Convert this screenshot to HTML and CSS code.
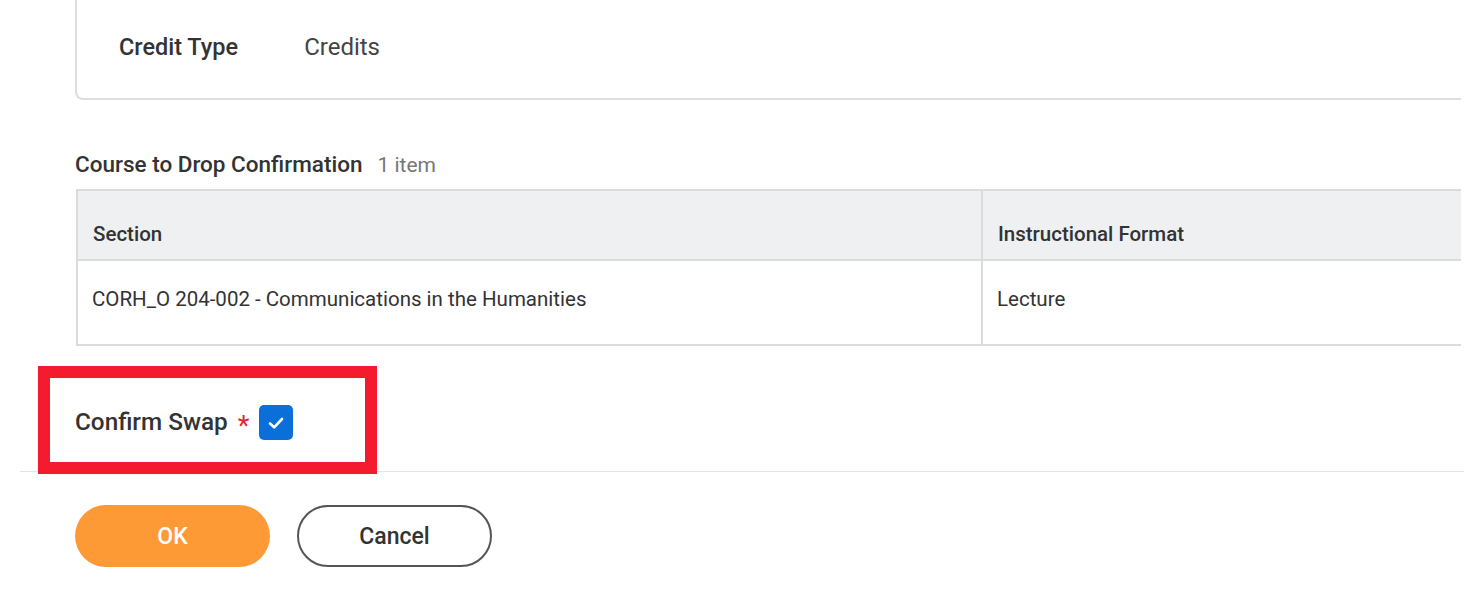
FILE: index.html
```html
<!DOCTYPE html>
<html lang="en">
<head>
  <meta charset="UTF-8" />
  <title>Course to Drop Confirmation</title>
  <link rel="stylesheet" href="styles.css">
</head>
<body>
  <div class="page">
    <div class="card">
      <span class="field-label">Credit Type</span>
      <span class="field-value">Credits</span>
    </div>

    <div class="grid-title">
      <span class="grid-name">Course to Drop Confirmation</span>
      <span class="grid-count">1 item</span>
    </div>

    <table class="grid">
      <tr>
        <th class="col-section">Section</th>
        <th>Instructional Format</th>
      </tr>
      <tr>
        <td class="col-section">CORH_O 204-002 - Communications in the Humanities</td>
        <td>Lecture</td>
      </tr>
    </table>

    <div class="confirm">
      <span class="confirm-label">Confirm Swap</span>
      <span class="required">*</span>
      <span class="checkbox">
        <svg width="22" height="22" viewBox="0 0 22 22"><path d="M5 11.5 L9.2 15.3 L17 7" fill="none" stroke="#fff" stroke-width="2.6" stroke-linecap="round" stroke-linejoin="round"/></svg>
      </span>
      <!-- annotation box -->
      <div class="highlight"></div>
    </div>
  </div>

  <div class="footer">
    <button class="btn btn-ok">OK</button>
    <button class="btn btn-cancel">Cancel</button>
  </div>
</body>
</html>
```

FILE: styles.css
```css
* {
  margin: 0; padding: 0; box-sizing: border-box;
}

html, body {
  height: 100%;
  overflow: hidden;
  background: #fff;
  font-family: Roboto, "Liberation Sans", Arial, sans-serif;
  color: #333;
}

.page {
  padding-left: 75px;
  margin-right: 3px;
}

.card {
  height: 100px;
  border: 2px solid #dcdee1;
  border-top: none;
  border-right: none;
  border-radius: 0 0 0 8px;
  display: flex;
  align-items: center;
  gap: 66px;
  padding-left: 42px;
  padding-bottom: 4px;
}

.field-label {
  font-size: 23.5px;
  font-weight: 500;
  color: #333;
}

.field-value {
  font-size: 24px;
  color: #444;
}

.grid-title {
  margin-top: 51px;
  display: flex;
  align-items: baseline;
  gap: 15px;
}

.grid-name {
  font-size: 22.5px;
  font-weight: 500;
  color: #333;
}

.grid-count {
  font-size: 21px;
  color: #777;
}

.grid {
  margin-top: 12px;
  margin-left: 1px;
  width: calc(100% - 1px);
  border-collapse: collapse;
  border: 2px solid #d9dbde;
  border-right: none;
}

.grid th, .grid td {
  text-align: left;
  padding: 0 15px;
  font-size: 20.5px;
  border-left: 2px solid #d9dbde;
}

.grid th {
  height: 70px;
  background: #eff0f2;
  font-weight: 500;
  color: #333;
  border-bottom: 2px solid #d9dbde;
  padding-top: 18px;
}

.grid td {
  height: 85px;
  color: #333;
  padding: 0 15px 8px 14px;
}

.grid .col-section {
  width: 905px;
}

.confirm {
  position: relative;
  height: 125px;
  display: flex;
  align-items: flex-start;
  padding-top: 59px;
}

.confirm-label {
  font-size: 24.3px;
  font-weight: 500;
  color: #333;
  line-height: 34px;
}

.required {
  color: #e5252f;
  font-size: 27px;
  line-height: 34px;
  margin: 4px 10px 0 10px;
}

.checkbox {
  width: 34px;
  height: 35px;
  border-radius: 5px;
  background: #0b6fd9;
  display: flex;
  align-items: center;
  justify-content: center;
}

.highlight {
  position: absolute;
  left: -37px;
  top: 20px;
  width: 339px;
  height: 108px;
  border: 12px solid #f31b2d;
}

.footer {
  margin-left: 20px;
  border-top: 1px solid #e5e5e5;
  padding: 33px 0 0 55px;
  display: flex;
  gap: 27px;
}

.btn {
  height: 62px;
  width: 195px;
  border-radius: 31px;
  font-family: Roboto, "Liberation Sans", Arial, sans-serif;
  font-size: 23px;
  font-weight: 500;
  cursor: pointer;
}

.btn-ok {
  background: #fe9a35;
  border: none;
  color: #fff;
}

.btn-cancel {
  background: #fff;
  border: 2px solid #555;
  color: #333;
}
```
